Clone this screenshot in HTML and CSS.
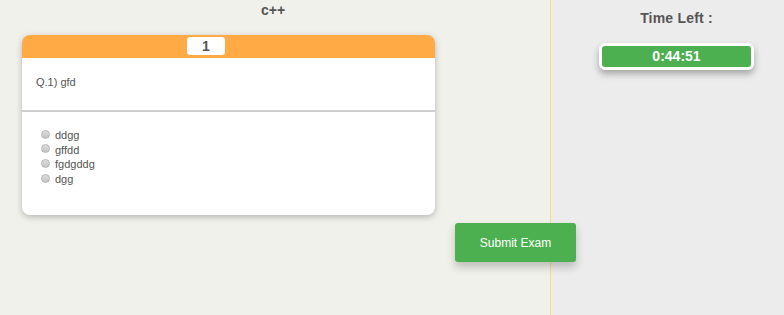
FILE: index.html
```html
<!DOCTYPE html>
<html>
<head>
<meta charset="utf-8">
<link rel="stylesheet" href="styles.css">
</head>
<body>
<div class="page">
  <div class="main">
    <div class="title">c++</div>
    <div class="card">
      <div class="card-head"><span class="badge">1</span></div>
      <div class="question">Q.1) gfd</div>
      <div class="options">
        <label class="opt"><span class="radio"></span>ddgg</label>
        <label class="opt"><span class="radio"></span>gffdd</label>
        <label class="opt"><span class="radio"></span>fgdgddg</label>
        <label class="opt"><span class="radio"></span>dgg</label>
      </div>
    </div>
    <div class="actions"><button class="submit">Submit Exam</button></div>
  </div>
  <div class="side">
    <div class="time-label">Time Left :</div>
    <div class="timer">0:44:51</div>
  </div>
</div>
</body>
</html>
```
FILE: styles.css
```css
html, body { margin: 0; padding: 0; height: 100%; }
body { font-family: "Liberation Sans", Arial, sans-serif; color: #555; }
.page { display: flex; height: 315px; }
.main { width: 550px; background: #f1f1ec; border-right: 1px solid #f7df7f; position: relative; z-index: 2; }
.side { flex: 1; background: #ececec; display: flex; flex-direction: column; align-items: center; padding-left: 18px; }
.title { text-align: center; font-weight: bold; font-size: 14px; line-height: 17px; padding: 2px 4px 0 0; color: #555; }
.card { margin: 16px 0 0 22px; width: 413px; height: 180px; background: #fff; border-radius: 8px; box-shadow: 0 2px 6px rgba(0,0,0,0.25); overflow: hidden; }
.card-head { height: 23px; background: #ffaa44; display: flex; align-items: flex-start; padding-left: 165px; }
.badge { margin-top: 2px; width: 38px; height: 18px; background: #fff; border-radius: 3px; text-align: center; font-weight: bold; font-size: 14px; line-height: 18px; color: #555; }
.question { height: 52px; border-bottom: 2px solid #cfcfcf; padding-left: 14px; font-size: 11px; line-height: 48px; color: #555; }
.options { padding: 16px 0 0 19px; display: flex; flex-direction: column; }
.opt { display: flex; align-items: center; font-size: 11px; line-height: 14.6px; color: #555; }
.radio { width: 7px; height: 7px; border-radius: 50%; border: 1px solid #b5b5b5; background: linear-gradient(#ddd, #c4c4c4); margin-right: 5px; margin-top: -2px; }
.actions { padding: 8px 0 0 455px; }
.submit { position: relative; width: 121px; height: 39px; background: #4caf50; color: #fff; border: none; border-radius: 3px; font-family: "Liberation Sans", Arial, sans-serif; font-size: 12px; box-shadow: 0 5px 8px rgba(0,0,0,0.22); padding: 0; }
.time-label { margin-top: 10px; font-weight: bold; font-size: 14px; line-height: 17px; color: #555; letter-spacing: 0.2px; }
.timer { margin-top: 16px; width: 149px; height: 21px; border: 3px solid #fff; border-radius: 6px; background: #4caf50; color: #fff; font-weight: bold; font-size: 14px; line-height: 21px; text-align: center; box-shadow: 0 4px 7px rgba(0,0,0,0.3); }
```
